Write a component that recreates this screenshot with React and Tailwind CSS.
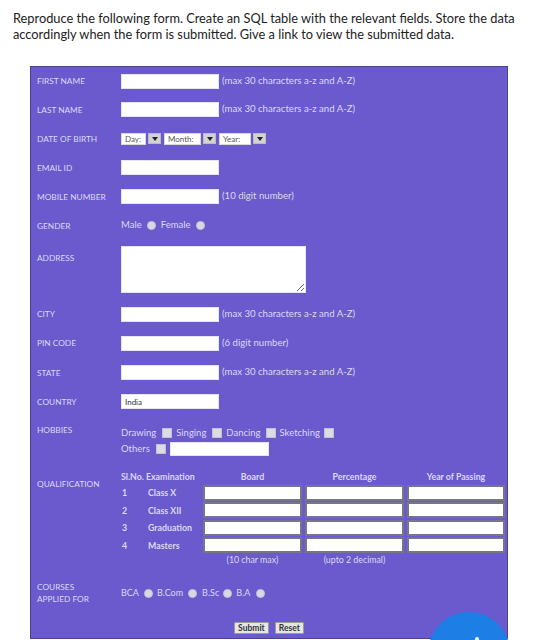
import React from 'react';

const txt = 'text-[#dcd8f6]';

function Label({ children, className = '' }) {
    return <div className={`w-[84px] shrink-0 text-[8.3px] leading-[10px] uppercase ${txt} ${className}`}>{children}</div>;
}

function Hint({ children }) {
    return <span className={`ml-[3px] text-[9.6px] ${txt}`}>{children}</span>;
}

function TextBox({ className = 'w-[98px] h-[15px]', value }) {
    return (
        <input
            readOnly
            defaultValue={value}
            className={`${className} bg-white border border-[#e6e4f8] px-[3px] text-[8px] text-[#333] outline-none`}
        />
    );
}

function Radio() {
    return <span className="inline-block w-[9px] h-[9px] rounded-full bg-[#d9d8e2] border border-[#c4c2d4]" />;
}

function Check() {
    return <span className="inline-block w-[10px] h-[10px] bg-[#dcdbe4] border border-[#c2c0d2]" />;
}

function Select({ label, w }) {
    return (
        <div className="flex items-center gap-[2px]">
            <div className={`${w} h-[12px] bg-white border border-[#d8d8d8] flex items-center px-[3px] text-[8px] text-[#555]`}>{label}</div>
            <div className="w-[13px] h-[11px] bg-[#d3d3d3] border border-[#bcbcbc] flex items-center justify-center">
                <svg width="6" height="4" viewBox="0 0 6 4"><path d="M0 0h6L3 4z" fill="#222" /></svg>
            </div>
        </div>
    );
}

function Row({ label, h, children }) {
    return (
        <div className={`flex items-center ${h}`}>
            <Label>{label}</Label>
            <div className="flex items-center">{children}</div>
        </div>
    );
}

const exams = [['1', 'Class X'], ['2', 'Class XII'], ['3', 'Graduation'], ['4', 'Masters']];
const qInput = 'h-[16px] bg-white border-2 border-[#77758a] outline-none';

export default function App() {
    return (
        <div className="relative w-[537px] h-[640px] overflow-hidden bg-white font-['Lato','Open_Sans',sans-serif]">
            {/* task text */}
            <div className="pl-[13px] pt-[10px] text-[12.8px] leading-[16px] text-[#222]">
                <div className="whitespace-nowrap">Reproduce the following form. Create an SQL table with the relevant fields. Store the data</div>
                <div className="whitespace-nowrap">accordingly when the form is submitted. Give a link to view the submitted data.</div>
            </div>

            {/* form panel */}
            <div className="ml-[30px] mt-[24px] w-[478px] bg-[#6a5acd] border border-[#4a4290] pl-[6px] pb-[4px]">
                <Row label="First Name" h="h-[28px]">
                    <TextBox />
                    <Hint>(max 30 characters a-z and A-Z)</Hint>
                </Row>
                <Row label="Last Name" h="h-[29px]">
                    <TextBox />
                    <Hint>(max 30 characters a-z and A-Z)</Hint>
                </Row>
                <Row label="Date of Birth" h="h-[29px]">
                    <div className="flex items-center gap-[3px]">
                        <Select label="Day:" w="w-[25px]" />
                        <Select label="Month:" w="w-[37px]" />
                        <Select label="Year:" w="w-[32px]" />
                    </div>
                </Row>
                <Row label="Email ID" h="h-[29px]">
                    <TextBox />
                </Row>
                <Row label="Mobile Number" h="h-[29px]">
                    <TextBox />
                    <Hint>(10 digit number)</Hint>
                </Row>
                <Row label="Gender" h="h-[29px]">
                    <div className={`flex items-center text-[9.5px] ${txt}`}>
                        <span>Male</span>
                        <span className="ml-[5px] flex"><Radio /></span>
                        <span className="ml-[5px]">Female</span>
                        <span className="ml-[6px] flex"><Radio /></span>
                    </div>
                </Row>

                {/* address */}
                <div className="flex h-[60px]">
                    <Label className="pt-[13px]">Address</Label>
                    <textarea
                        readOnly
                        className="mt-[6px] w-[185px] h-[47px] bg-white border border-[#e6e4f8] outline-none resize"
                    />
                </div>

                <Row label="City" h="h-[28px]">
                    <TextBox />
                    <Hint>(max 30 characters a-z and A-Z)</Hint>
                </Row>
                <Row label="Pin Code" h="h-[30px]">
                    <TextBox />
                    <Hint>(6 digit number)</Hint>
                </Row>
                <Row label="State" h="h-[29px]">
                    <TextBox />
                    <Hint>(max 30 characters a-z and A-Z)</Hint>
                </Row>
                <Row label="Country" h="h-[29px]">
                    <TextBox value="India" />
                </Row>

                {/* hobbies */}
                <div className="flex pt-[9px]">
                    <Label>Hobbies</Label>
                    <div className={`text-[9.5px] ${txt}`}>
                        <div className="flex items-center h-[16px]">
                            <span>Drawing</span>
                            <span className="ml-[6px] flex"><Check /></span>
                            <span className="ml-[4px]">Singing</span>
                            <span className="ml-[6px] flex"><Check /></span>
                            <span className="ml-[4px]">Dancing</span>
                            <span className="ml-[5px] flex"><Check /></span>
                            <span className="ml-[4px]">Sketching</span>
                            <span className="ml-[4px] flex"><Check /></span>
                        </div>
                        <div className="flex items-center h-[16px]">
                            <span>Others</span>
                            <span className="ml-[6px] flex"><Check /></span>
                            <span className="ml-[4px] flex"><TextBox className="w-[99px] h-[14px]" /></span>
                        </div>
                    </div>
                </div>

                {/* qualification */}
                <div className="flex pt-[12px]">
                    <Label className="pt-[10px]">Qualification</Label>
                    <div className={`grid grid-cols-[27px_55px_102px_102px_98px] text-[8.8px] ${txt}`}>
                        <div className="col-span-2 h-[15px] flex items-center font-bold whitespace-nowrap">Sl.No.&nbsp;Examination</div>
                        <div className="h-[15px] flex items-center justify-center pr-[3px] font-bold">Board</div>
                        <div className="h-[15px] flex items-center justify-center pr-[3px] font-bold">Percentage</div>
                        <div className="h-[15px] flex items-center justify-center font-bold">Year of Passing</div>
                        {exams.map(([n, name]) => (
                            <React.Fragment key={n}>
                                <div className="h-[17.5px] flex items-center pl-[1px] font-bold">{n}</div>
                                <div className="h-[17.5px] flex items-center font-bold">{name}</div>
                                <div className="h-[17.5px] flex items-center"><input readOnly className={`w-[99px] ${qInput}`} /></div>
                                <div className="h-[17.5px] flex items-center"><input readOnly className={`w-[99px] ${qInput}`} /></div>
                                <div className="h-[17.5px] flex items-center"><input readOnly className={`w-[98px] ${qInput}`} /></div>
                            </React.Fragment>
                        ))}
                        <div className="col-span-2 h-[12px]" />
                        <div className="h-[12px] flex items-center justify-center pr-[3px]">(10 char max)</div>
                        <div className="h-[12px] flex items-center justify-center pr-[3px]">(upto 2 decimal)</div>
                        <div className="h-[12px]" />
                    </div>
                </div>

                {/* courses */}
                <div className="flex items-center pt-[15px]">
                    <Label className="leading-[12px]">Courses<br />Applied For</Label>
                    <div className={`flex items-center text-[9px] ${txt}`}>
                        <span>BCA</span>
                        <span className="ml-[5px] flex"><Radio /></span>
                        <span className="ml-[4px]">B.Com</span>
                        <span className="ml-[5px] flex"><Radio /></span>
                        <span className="ml-[5px]">B.Sc</span>
                        <span className="ml-[4px] flex"><Radio /></span>
                        <span className="ml-[4px]">B.A</span>
                        <span className="ml-[6px] flex"><Radio /></span>
                    </div>
                </div>

                {/* buttons */}
                <div className="flex justify-center gap-[6px] mt-[17px] pr-[6px]">
                    <button className="h-[12px] px-[3px] bg-[#e6e6e6] border border-[#9a9a9a] rounded-[1px] text-[8.5px] font-bold leading-none text-[#333]">Submit</button>
                    <button className="h-[12px] px-[3px] bg-[#e6e6e6] border border-[#9a9a9a] rounded-[1px] text-[8.5px] font-bold leading-none text-[#333]">Reset</button>
                </div>
            </div>

            {/* floating blue button, cut off by the window */}
            <div className="absolute left-[428px] top-[612px] w-[82px] h-[82px] rounded-full bg-[#1d7ee6] flex justify-center">
                <span className="mt-[25px] ml-[16px] w-[4px] h-[4px] rounded-full bg-white" />
            </div>
        </div>
    );
}
